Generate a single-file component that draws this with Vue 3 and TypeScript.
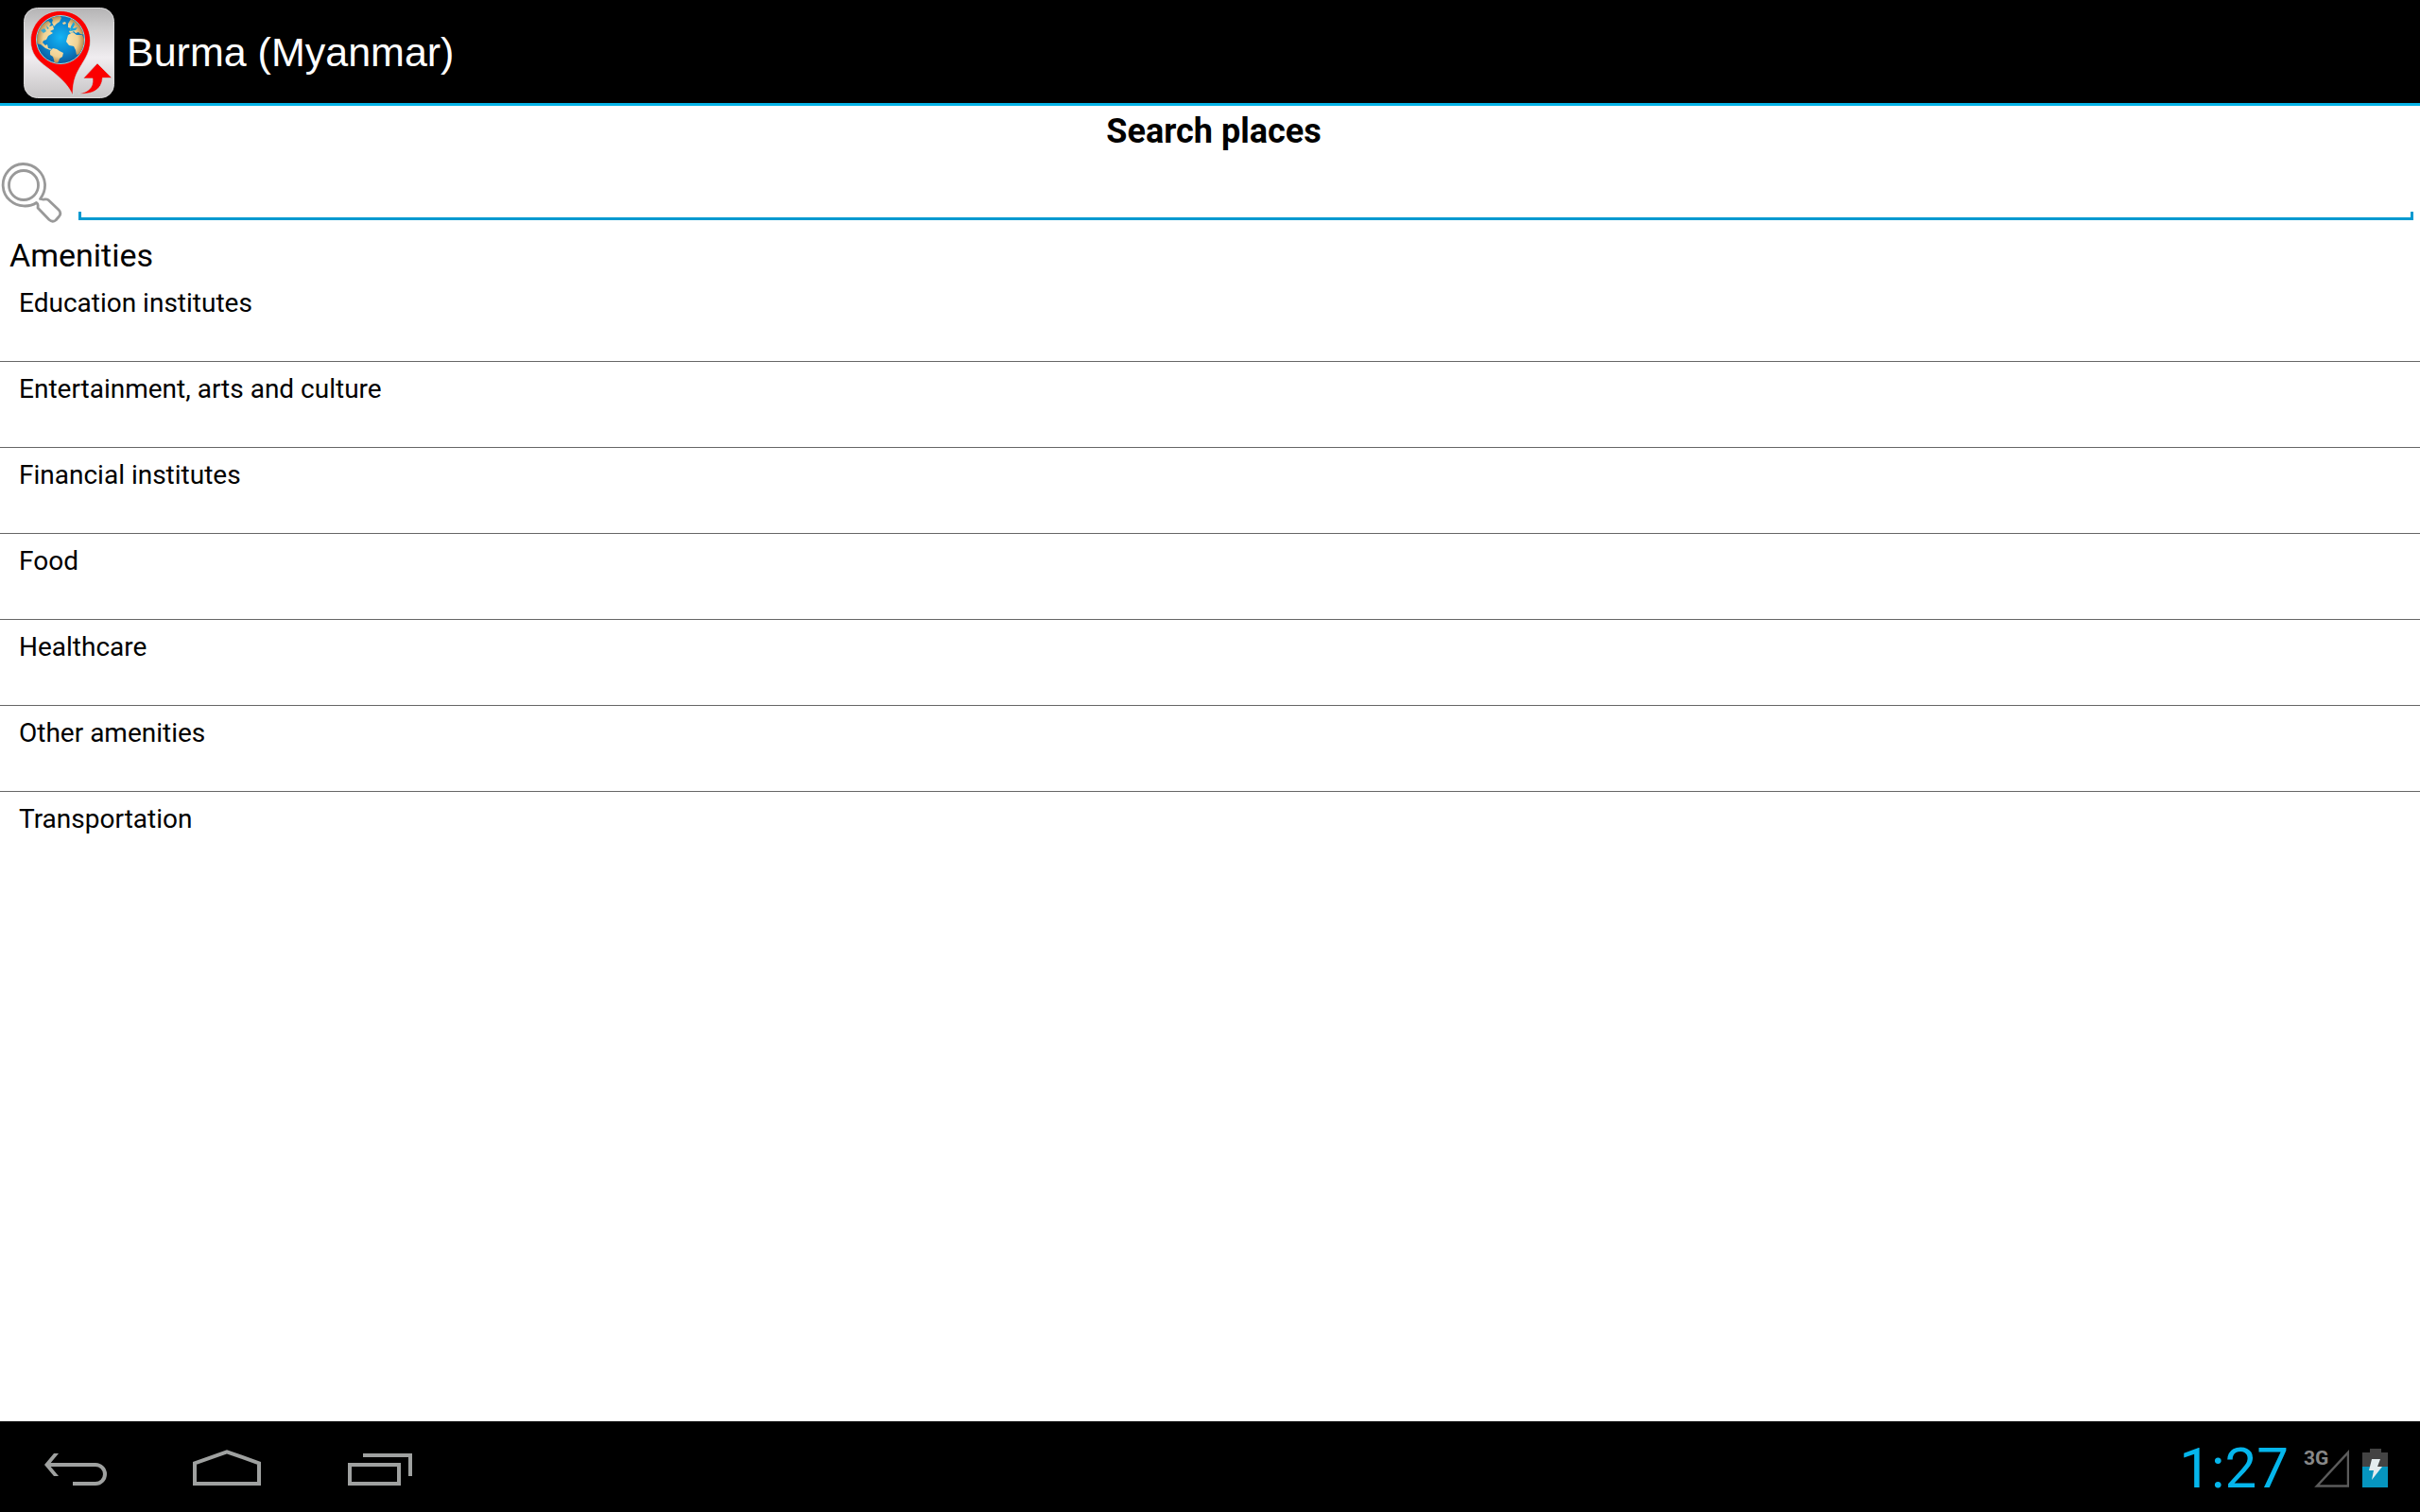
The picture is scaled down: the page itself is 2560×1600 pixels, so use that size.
<script setup lang="ts">
import { ref } from 'vue'

const query = ref('')
const amenities: string[] = [
  'Education institutes',
  'Entertainment, arts and culture',
  'Financial institutes',
  'Food',
  'Healthcare',
  'Other amenities',
  'Transportation',
]
</script>

<template>
  <div class="screen">
    <header class="action-bar">
      <svg class="app-icon" viewBox="0 0 96 96" aria-hidden="true">
        <defs>
          <linearGradient id="tile" x1="0" y1="0" x2="0" y2="1">
            <stop offset="0" stop-color="#b4b3b4" />
            <stop offset="0.25" stop-color="#d2d1d2" />
            <stop offset="0.55" stop-color="#f0edf0" />
            <stop offset="1" stop-color="#c6c4c5" />
          </linearGradient>
          <radialGradient id="sea" cx="0.5" cy="0.45" r="0.55">
            <stop offset="0" stop-color="#14b4f4" />
            <stop offset="0.6" stop-color="#0a86cf" />
            <stop offset="1" stop-color="#0d5c9c" />
          </radialGradient>
          <radialGradient id="land" gradientUnits="userSpaceOnUse" cx="39" cy="34" r="26">
            <stop offset="0" stop-color="#fff0c4" />
            <stop offset="0.7" stop-color="#f0d294" />
            <stop offset="1" stop-color="#a97f45" />
          </radialGradient>
          <clipPath id="disc"><circle cx="39" cy="34" r="25" /></clipPath>
        </defs>
        <rect x="0.5" y="0.5" width="95" height="95" rx="14" fill="url(#tile)" stroke="#dddcdd" />
        <path
          d="M39 3.500C21 3.500 7.500 17.500 7.500 35C7.500 49 15 56 25 63.500C37 72.500 47 81 52 93C52 84 53 76 57 68C62 58 70.500 49 70.500 35C70.500 17.500 57 3.500 39 3.500Z"
          fill="#fb0000" stroke="#bfeff0" stroke-width="0.600"
        />
        <circle cx="39" cy="34" r="25.500" fill="url(#sea)" stroke="#8be0e8" />
        <g clip-path="url(#disc)" fill="url(#land)">
          <path d="M13 30L17 21L22 16L26 14L29 17L27 20L31 19L32 23L28 25L31 27L26 30L24 34L21 35L20 37L23 40L25 39L26 43L30 44L28 45L23 43L18 39L13 38Z" />
          <path d="M27 9L32 10L38 8L40 11L38 15L35 17L32 20L30 16L31 13Z" />
          <path d="M41 16L44 15L45 17L42 18Z" />
          <path d="M28 46L31 43L35 44L38 46L42 48L41 52L38 54L37 57L33 61L32 55L31 52L28 50Z" />
          <path d="M47 17L50 12L54 12L66 22V29L60 28L58 26L55 27L53 25L50 27L48 26L50 22L47 21Z" />
          <path d="M47 29L52 26L56 29L62 29L65 35L63 43L59 49L56 50L55 45L53 41L48 40L45 36Z" />
          <path d="M50 20L53 15L54 18L52 22L57 21L55 24L49 25Z" fill="#1aa6dc" />
          <path d="M18 24L22 22L24 25L21 27ZM24 19L27 22L25 23Z" fill="#3fa9cf" />
        </g>
        <path
          d="M78 59L93.500 74.500H83.500C83 87 72 92.500 58.500 91C67 89.500 74 86 73 75H63Z"
          fill="#fb0000" stroke="#bfeff0" stroke-width="0.600"
        />
      </svg>
      <h1 class="title">Burma (Myanmar)</h1>
    </header>

    <main class="content">
      <label class="heading" for="search">Search places</label>
      <div class="search-row">
        <svg class="magnifier" viewBox="0 1 68 68" fill="none" aria-hidden="true">
          <g stroke="#999" stroke-width="2.800" stroke-linejoin="round">
            <circle cx="25" cy="25" r="15.500" />
            <path d="M42.500 39.500C50 30 49 17 40.500 9C31 0 17 0.500 9 9.500C0.500 19 1.500 33 10.500 41C19 48.500 31 48.500 38.500 43.500C41 45 40 46 40 49L52 61.500C54.500 63.800 57 63.500 59 62L62.500 58C64.500 55.500 64 53 62 51L51 40.500C49 39 47 40.500 45 40Z" />
          </g>
        </svg>
        <span class="field">
          <input id="search" v-model="query" type="text" autocomplete="off" />
        </span>
      </div>

      <h2 class="section">Amenities</h2>
      <ul class="list">
        <li v-for="name in amenities" :key="name">
          <button type="button" class="item">{{ name }}</button>
        </li>
      </ul>
    </main>

    <footer class="system-bar">
      <nav class="nav" aria-label="System">
        <button type="button" aria-label="Back">
          <svg viewBox="0 0 80 44">
            <path d="M12 20H61A10 10 0 0 1 61 40H37" />
            <path class="solid" d="M7 20L17 8H22L12 20L22 32H17Z" />
          </svg>
        </button>
        <button type="button" aria-label="Home">
          <svg viewBox="0 0 80 44">
            <path d="M6 40V18.300L40 6.300L74 18.300V40Z" />
          </svg>
        </button>
        <button type="button" aria-label="Recent apps">
          <svg viewBox="0 0 80 44">
            <path d="M10 20H62V40H10ZM24 10H74V32" />
          </svg>
        </button>
      </nav>

      <div class="status">
        <time class="clock">1:27</time>
        <span class="signal">
          <svg viewBox="0 0 48 42" aria-hidden="true">
            <path d="M14 39.500L47 4V39.500Z" fill="none" stroke="#5b5b5b" stroke-width="2.500" />
          </svg>
          <span class="network">3G</span>
        </span>
        <svg class="battery" viewBox="0 0 28 42" aria-hidden="true">
          <path d="M8 0H20V4H27V19H0V4H8Z" fill="#434343" />
          <path d="M0 19H27V41H0Z" fill="#0695bf" />
          <path d="M10 11H19L16 19H21L10 33L12 23H7Z" fill="#e4ecee" />
        </svg>
      </div>
    </footer>
  </div>
</template>

<style>
body {
  margin: 0;
  background: #fff;
}
</style>

<style scoped>
.screen {
  display: flex;
  flex-direction: column;
  min-height: 100vh;
  background: #fff;
  color: #000;
  font-family: Roboto, 'Noto Sans', sans-serif;
}

.action-bar {
  display: flex;
  align-items: center;
  gap: 13px;
  box-sizing: border-box;
  height: 112px;
  padding: 3px 25px 0;
  border-bottom: 3px solid #05b3e6;
  background: #000;
}

.app-icon {
  width: 96px;
  height: 96px;
}

.title {
  margin: 0;
  padding-bottom: 3px;
  color: #fff;
  font: 400 43px/48px 'Liberation Sans', Arial, sans-serif;
}

.content {
  display: flex;
  flex: 1;
  flex-direction: column;
}

.heading {
  padding: 5px 0 3px 8px;
  font-size: 36px;
  font-weight: 700;
  line-height: 44px;
  text-align: center;
}

.search-row {
  display: flex;
  align-items: flex-end;
  gap: 15px;
  height: 76px;
  padding-right: 7px;
}

.magnifier {
  width: 68px;
  height: 68px;
}

/* The underline ends in a short upright at each side */
.field {
  display: flex;
  flex: 1;
  margin-bottom: 7px;
  border-bottom: 3px solid #0099d0;
  background:
    linear-gradient(#0099d0, #0099d0) left bottom / 3px 6px no-repeat,
    linear-gradient(#0099d0, #0099d0) right bottom / 3px 6px no-repeat;
}

.field input {
  flex: 1;
  height: 56px;
  padding: 0 12px;
  border: 0;
  outline: 0;
  background: transparent;
  color: #000;
  font: 400 36px/44px Roboto, sans-serif;
}

.section {
  margin: 0;
  padding: 8px 10px 0;
  font-size: 34px;
  font-weight: 400;
  line-height: 44px;
}

.list {
  margin: 0;
  padding: 0;
  list-style: none;
}

.list li + li {
  border-top: 1px solid #666;
}

.item {
  display: flex;
  align-items: flex-start;
  width: 100%;
  height: 90px;
  padding: 13px 20px;
  border: 0;
  background: transparent;
  color: #000;
  font: 400 28px/32px Roboto, sans-serif;
  text-align: left;
}

.system-bar {
  display: flex;
  align-items: center;
  justify-content: space-between;
  height: 96px;
  padding: 0 33px 0 0;
  background: #000;
}

.nav {
  display: flex;
}

.nav button {
  display: flex;
  align-items: center;
  justify-content: center;
  width: 160px;
  height: 96px;
  padding: 0;
  border: 0;
  background: transparent;
}

.nav svg {
  width: 80px;
  height: 44px;
  fill: none;
  stroke: #9fa1a0;
  stroke-width: 4;
}

.nav .solid {
  fill: #9fa1a0;
  stroke: none;
}

.status {
  display: flex;
  align-items: center;
  padding-top: 4px;
}

.clock {
  margin-right: 16px;
  color: #05b6ec;
  font-size: 60px;
  line-height: 64px;
}

.signal {
  position: relative;
  display: flex;
  margin-right: 14px;
}

.signal svg {
  width: 48px;
  height: 42px;
}

.network {
  position: absolute;
  top: 0;
  left: 0;
  color: #888;
  font-size: 21px;
  font-weight: 700;
  line-height: 20px;
}

.battery {
  width: 28px;
  height: 42px;
}
</style>
